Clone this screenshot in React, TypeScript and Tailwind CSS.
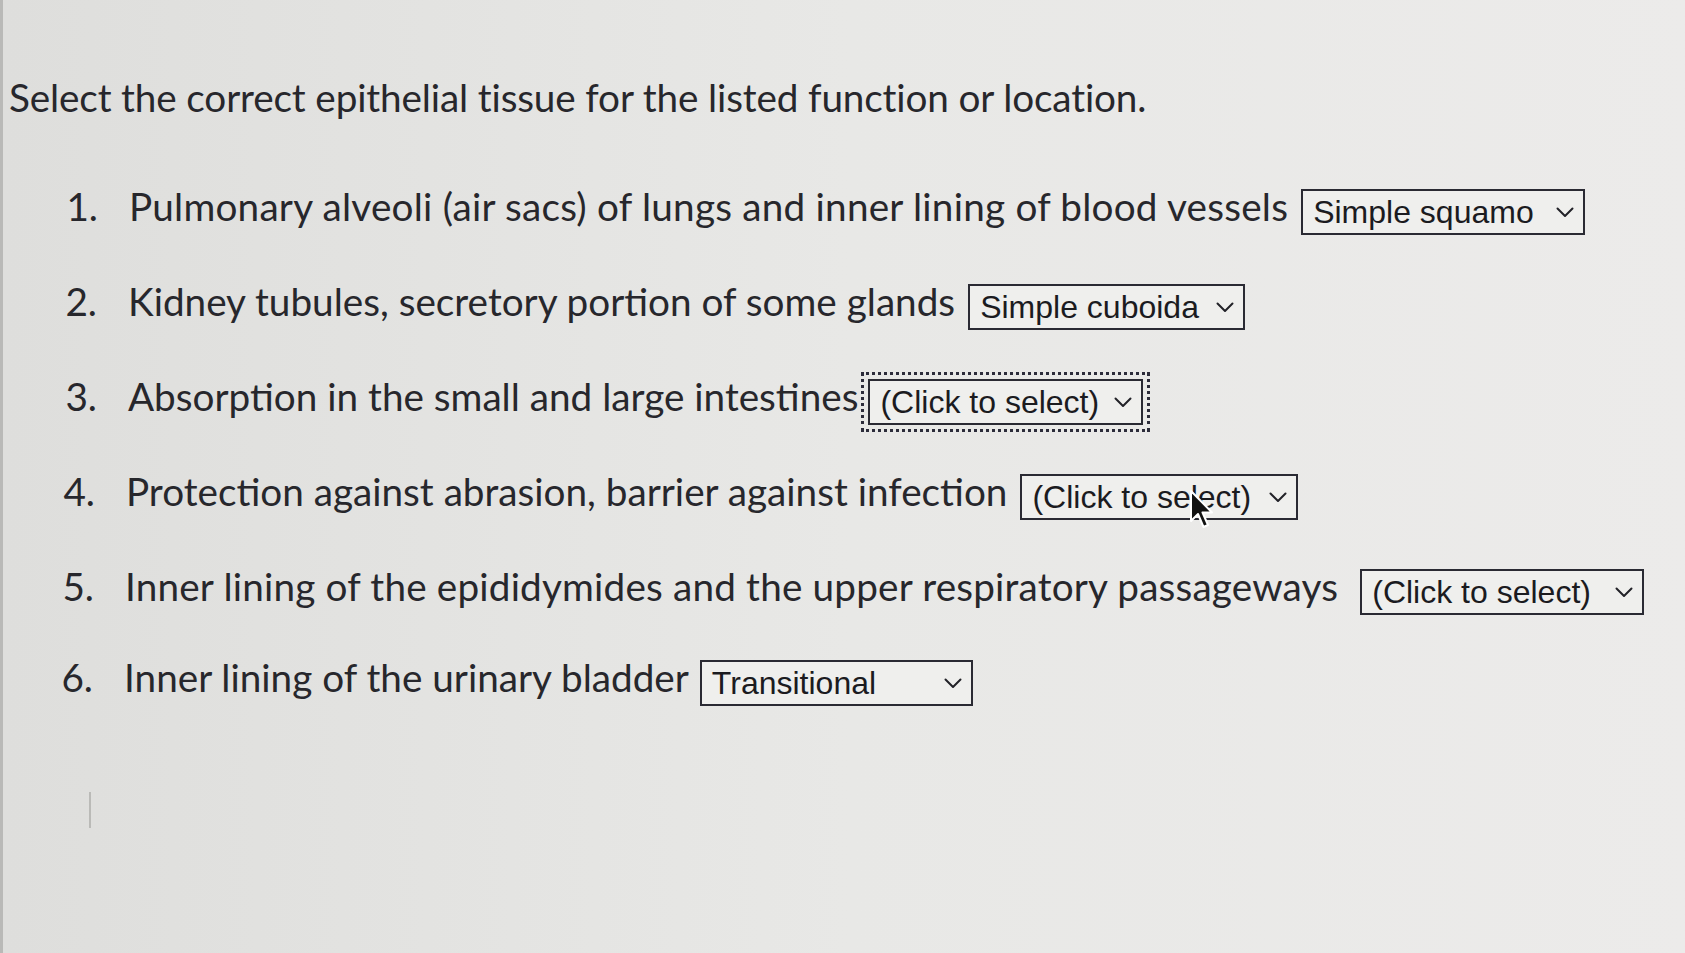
import React from "react";

type Row = {
  n: string;
  label: string;
  value: string;
  width: number;
  gapClass: string;
  rowClass: string;
  trackClass: string;
  focused?: boolean;
};

const rows: Row[] = [
  { n: "1.", label: "Pulmonary alveoli (air sacs) of lungs and inner lining of blood vessels", value: "Simple squamo", width: 284, gapClass: "ml-[13px]", rowClass: "ml-[1px]", trackClass: "tracking-[0.22px]" },
  { n: "2.", label: "Kidney tubules, secretory portion of some glands", value: "Simple cuboida", width: 277, gapClass: "ml-[13px]", rowClass: "ml-0", trackClass: "tracking-[0px]" },
  { n: "3.", label: "Absorption in the small and large intestines", value: "(Click to select)", width: 275, gapClass: "ml-[3px]", rowClass: "ml-0", trackClass: "tracking-[0px]", focused: true },
  { n: "4.", label: "Protection against abrasion, barrier against infection", value: "(Click to select)", width: 278, gapClass: "ml-[13px]", rowClass: "ml-[-2px]", trackClass: "tracking-[0px]" },
  { n: "5.", label: "Inner lining of the epididymides and the upper respiratory passageways", value: "(Click to select)", width: 284, gapClass: "ml-[22px]", rowClass: "ml-[-3px]", trackClass: "tracking-[0.18px]" },
  { n: "6.", label: "Inner lining of the urinary bladder", value: "Transitional", width: 273, gapClass: "ml-[11px]", rowClass: "ml-[-4px]", trackClass: "tracking-[0px]" },
];

function Chevron() {
  return (
    <svg width="18" height="11" viewBox="0 0 18 11" className="shrink-0" aria-hidden>
      <path d="M1.5 1.5 L9 9 L16.5 1.5" fill="none" stroke="#222228" strokeWidth="2" strokeLinecap="round" strokeLinejoin="round" />
    </svg>
  );
}

function SelectBox({ value, width }: { value: string; width: number }) {
  return (
    <div
      className="h-[46px] border-2 border-[#2a2a33] bg-[#efefed] flex items-center pl-[10px] pr-[9px] gap-[6px] shrink-0"
      style={{ width }}
    >
      <span
        className="flex-1 min-w-0 whitespace-nowrap text-[32px] leading-[40px] text-[#1b1b1f]"
        style={{ fontFamily: '"Liberation Sans", Arial, sans-serif' }}
      >
        {value}
      </span>
      <Chevron />
    </div>
  );
}

export default function App() {
  return (
    <div
      className="relative w-full h-[953px] overflow-hidden bg-linear-to-r from-[#dededc] via-[#e8e8e6] to-[#ecebea] border-l-[3px] border-[#b9b9b7] text-[#27272c]"
      style={{ fontFamily: 'Lato, "Noto Sans", sans-serif' }}
    >
      <div className="pt-[75px]">
        <p className="pl-[6px] text-[38.7px] leading-[44px] tracking-[-0.14px] whitespace-nowrap">
          Select the correct epithelial tissue for the listed function or location.
        </p>

        <ol className="mt-[65px] flex flex-col">
          {rows.map((r, i) => (
            <li key={r.n} className={"flex items-start h-[95px] " + r.rowClass + (i === 5 ? " -mt-[4px]" : "")}>
              <span className="w-[94px] shrink-0 text-right text-[38.7px] leading-[44px]">{r.n}</span>
              <span className={"ml-[31px] text-[38.7px] leading-[44px] whitespace-nowrap " + r.trackClass}>{r.label}</span>
              {r.focused ? (
                <div className={r.gapClass + " -mt-[2px] border-[3px] border-dotted border-[#2c2c3a] p-[4px] shrink-0"}>
                  <SelectBox value={r.value} width={r.width} />
                </div>
              ) : (
                <div className={r.gapClass + " mt-[5px]"}>
                  <SelectBox value={r.value} width={r.width} />
                </div>
              )}
            </li>
          ))}
        </ol>
      </div>

      {/* mouse cursor over the 4th select */}
      <svg
        className="absolute left-[1186px] top-[489px]"
        width="26"
        height="42"
        viewBox="0 0 26 42"
        aria-hidden
      >
        <path
          d="M2 2 L2 32 L9 25 L14.5 38 L19 36 L13.5 23.5 L23 23.5 Z"
          fill="#111"
          stroke="#fff"
          strokeWidth="2"
          strokeLinejoin="round"
        />
      </svg>

      {/* faint mark on the screen */}
      <div className="absolute left-[86px] top-[792px] w-[2px] h-[36px] bg-[#a9a9a7] opacity-70" />
    </div>
  );
}
